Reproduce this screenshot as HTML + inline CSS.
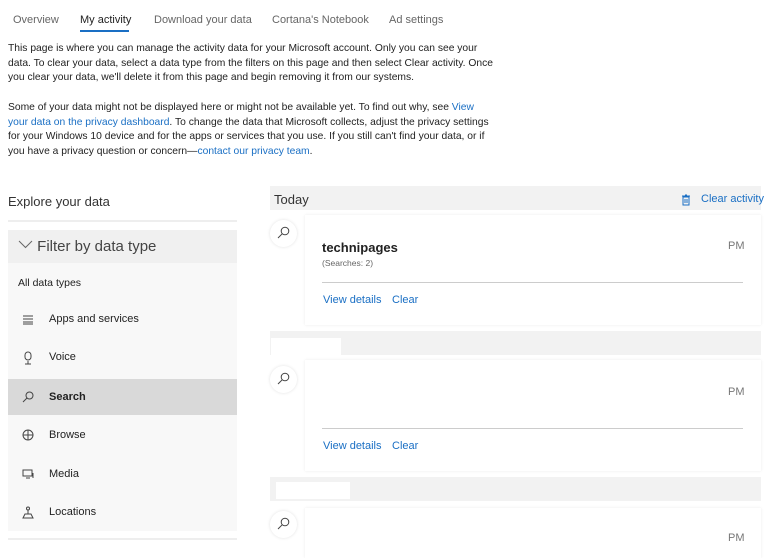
<!DOCTYPE html>
<html><head><meta charset="utf-8"><style>
*{margin:0;padding:0;box-sizing:border-box}
body{width:768px;height:548px;overflow:hidden;background:#fff;font-family:"Liberation Sans",sans-serif;color:#222;position:relative}
.a{position:absolute;white-space:nowrap}
.tab{font-size:11px;color:#666;top:14px}
p.t{position:absolute;left:8px;white-space:nowrap;font-size:10.3px;line-height:14.6px;color:#222}
a{color:#1a6fc4;text-decoration:none}
.lnk{color:#1a6fc4;font-size:11px}
.item{position:absolute;left:8px;width:229px;height:36px;font-size:11px}
.item span{position:absolute;left:41px;top:12px}
.item svg{position:absolute;left:14px;top:12px}
.card{position:absolute;left:305px;width:456px;background:#fff;box-shadow:0 0 3px rgba(0,0,0,.08)}
.band{position:absolute;left:270px;width:491px;height:24px;background:#f2f2f2}
.circ{position:absolute;left:270px;width:27px;height:27px;border-radius:50%;background:#fff;box-shadow:0 0 3px rgba(0,0,0,.12)}
.circ svg{position:absolute;left:7px;top:6px}
.pm{position:absolute;left:728px;font-size:11px;color:#777}
.hr{position:absolute;left:322px;width:421px;height:1px;background:#ccc}
</style></head><body>
<div class="a tab" style="left:13px">Overview</div>
<div class="a tab" style="left:80px;color:#222">My activity</div>
<div class="a" style="left:80px;top:30px;width:49px;height:2px;background:#1a6fc4"></div>
<div class="a tab" style="left:154px">Download your data</div>
<div class="a tab" style="left:272px">Cortana's Notebook</div>
<div class="a tab" style="left:389px">Ad settings</div>
<p class="t" style="top:42px">This page is where you can manage the activity data for your Microsoft account. Only you can see your<br>data. To clear your data, select a data type from the filters on this page and then select Clear activity. Once<br>you clear your data, we'll delete it from this page and begin removing it from our systems.</p>
<p class="t" style="top:101px">Some of your data might not be displayed here or might not be available yet. To find out why, see <a>View</a><br><a>your data on the privacy dashboard</a>. To change the data that Microsoft collects, adjust the privacy settings<br>for your Windows 10 device and for the apps or services that you use. If you still can't find your data, or if<br>you have a privacy question or concern—<a>contact our privacy team</a>.</p>

<div class="a" style="left:8px;top:194px;font-size:13px;color:#333">Explore your data</div>
<div class="a" style="left:8px;top:220px;width:229px;height:2px;background:#eee"></div>
<div class="a" style="left:8px;top:230px;width:229px;height:33px;background:#f0f0f0"></div>
<div class="a" style="left:18px;top:238px;font-size:15px;color:#444"><svg width="15" height="10" viewBox="0 0 15 10" style="vertical-align:2px"><path d="M1 2l6.5 6.5L14 2" fill="none" stroke="#666" stroke-width="1"/></svg> Filter by data type</div>
<div class="a" style="left:8px;top:263px;width:229px;height:268px;background:#f8f8f8"></div>
<div class="a" style="left:18px;top:277px;font-size:10.5px">All data types</div>
<div class="item" style="top:301px"><svg width="12" height="12"><path d="M1 3h10M1 6h10M1 9h10M1 11h10" stroke="#444"/></svg><span>Apps and services</span></div>
<div class="item" style="top:339px"><svg width="12" height="14"><rect x="3" y="1" width="6" height="8" rx="3" fill="none" stroke="#444"/><path d="M6 10v3M3 13h6" stroke="#444"/></svg><span>Voice</span></div>
<div class="item" style="top:379px;background:#d9d9d9;font-weight:bold"><svg width="12" height="12"><circle cx="7.5" cy="4.5" r="3.5" fill="none" stroke="#444"/><path d="M5 7L1 11" stroke="#444"/></svg><span>Search</span></div>
<div class="item" style="top:417px"><svg width="12" height="12"><circle cx="6" cy="6" r="5" fill="none" stroke="#444"/><path d="M1 6h10M6 1v10" stroke="#444"/></svg><span>Browse</span></div>
<div class="item" style="top:456px"><svg width="13" height="12"><rect x="1" y="2" width="9" height="6" fill="none" stroke="#444"/><path d="M4 10h4M11 5v5" stroke="#444"/></svg><span>Media</span></div>
<div class="item" style="top:494px"><svg width="12" height="13"><circle cx="6" cy="2.5" r="1.5" fill="none" stroke="#444"/><path d="M6 4v4M1 12l2-4h6l2 4z" fill="none" stroke="#444"/></svg><span>Locations</span></div>
<div class="a" style="left:8px;top:538px;width:229px;height:2px;background:#eee"></div>

<div class="band" style="top:186px"></div>
<div class="a" style="left:274px;top:192px;font-size:13px;color:#333">Today</div>
<svg class="a" style="left:681px;top:194px" width="10" height="12"><path d="M1 2h8M4 1h2M2 3h6v8H2z" fill="none" stroke="#1a6fc4"/><path d="M4 5v4M6 5v4" stroke="#1a6fc4"/></svg>
<div class="a lnk" style="left:701px;top:193px">Clear activity</div>

<div class="card" style="top:215px;height:110px"></div>
<div class="circ" style="top:220px"><svg width="13" height="13"><circle cx="8" cy="5" r="3.8" fill="none" stroke="#444"/><path d="M5.3 7.7L1 12" stroke="#444"/></svg></div>
<div class="a" style="left:322px;top:240px;font-size:13px;font-weight:bold;color:#222">technipages</div>
<div class="a" style="left:322px;top:258px;font-size:8.5px;color:#666">(Searches: 2)</div>
<div class="pm" style="top:240px">PM</div>
<div class="hr" style="top:282px"></div>
<div class="a lnk" style="left:323px;top:294px">View details</div>
<div class="a lnk" style="left:392px;top:294px">Clear</div>

<div class="band" style="top:331px"></div>
<div class="a" style="left:271px;top:338px;width:70px;height:17px;background:#fff"></div>
<div class="card" style="top:360px;height:111px"></div>
<div class="circ" style="top:366px"><svg width="13" height="13"><circle cx="8" cy="5" r="3.8" fill="none" stroke="#444"/><path d="M5.3 7.7L1 12" stroke="#444"/></svg></div>
<div class="pm" style="top:386px">PM</div>
<div class="hr" style="top:428px"></div>
<div class="a lnk" style="left:323px;top:440px">View details</div>
<div class="a lnk" style="left:392px;top:440px">Clear</div>

<div class="band" style="top:477px"></div>
<div class="a" style="left:276px;top:482px;width:74px;height:17px;background:#fff"></div>
<div class="card" style="top:508px;height:50px"></div>
<div class="circ" style="top:511px"><svg width="13" height="13"><circle cx="8" cy="5" r="3.8" fill="none" stroke="#444"/><path d="M5.3 7.7L1 12" stroke="#444"/></svg></div>
<div class="pm" style="top:532px">PM</div>
</body></html>
